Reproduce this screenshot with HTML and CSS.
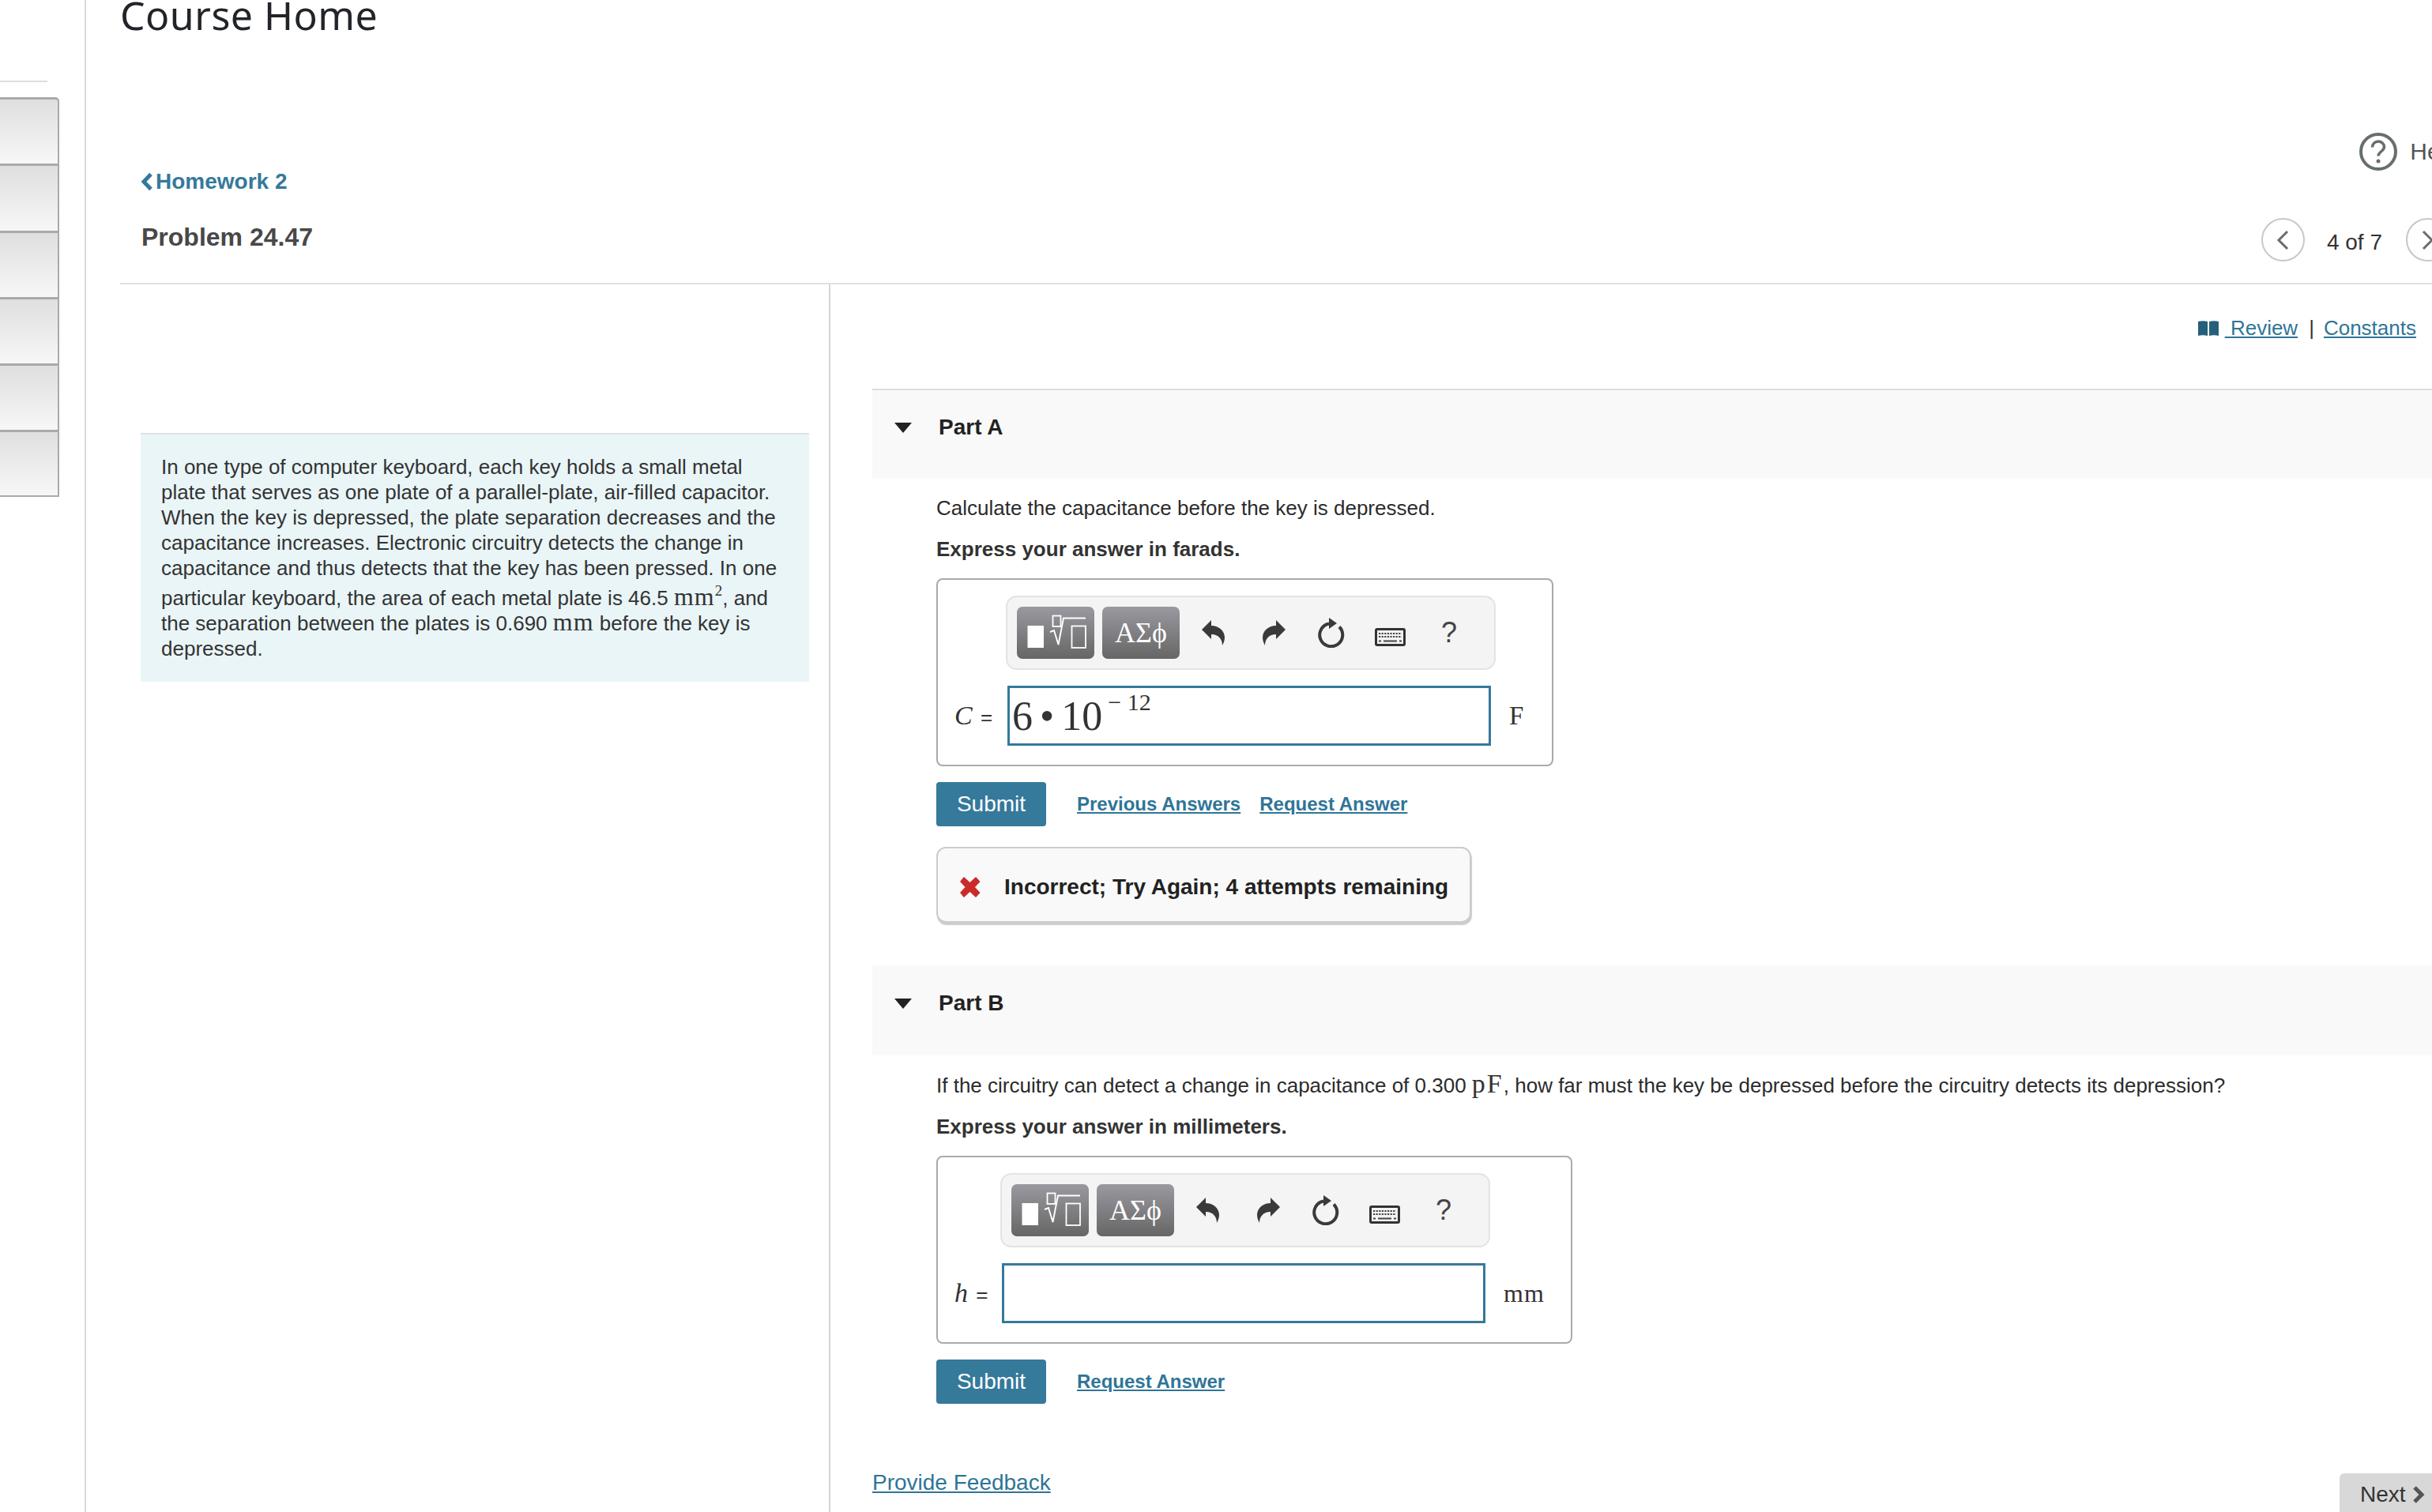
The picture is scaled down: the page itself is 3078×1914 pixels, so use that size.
FILE: index.html
```html
<!DOCTYPE html>
<html lang="en">
<head>
<meta charset="utf-8">
<title>Course Home</title>
<link rel="stylesheet" href="styles.css">
</head>
<body>
<svg class="defs" width="0" height="0" aria-hidden="true">
  <defs>
    <symbol id="i-sqrt" viewBox="0 0 98 66">
      <rect x="13.5" y="24" width="20.5" height="28" fill="#fff"/>
      <rect x="45.5" y="11.5" width="10" height="13.5" fill="none" stroke="#fff" stroke-width="1.8"/>
      <path d="M42 32l5-2 5.5 18L59 14.500h28" fill="none" stroke="#fff" stroke-width="1.900"/>
      <rect x="69.500" y="24.500" width="17.500" height="27.500" fill="none" stroke="#fff" stroke-width="1.800"/>
    </symbol>
    <symbol id="i-undo" viewBox="0 0 29 32">
      <path d="M0 12L12 0v7c10 0 17 7 17 15 0 4-1.500 7-3 10 0-7-4-14-14-14v6z" fill="#3a3a3a"/>
    </symbol>
    <symbol id="i-redo" viewBox="0 0 29 32">
      <path d="M29 12L17 0v7C7 7 0 14 0 22c0 4 1.500 7 3 10 0-7 4-14 14-14v6z" fill="#3a3a3a"/>
    </symbol>
    <symbol id="i-reload" viewBox="0 0 34 38">
      <path d="M27 11.500A14.500 14.500 0 1 1 14 7.500" fill="none" stroke="#3a3a3a" stroke-width="4"/>
      <path d="M14 0l10 7-10 7z" fill="#3a3a3a"/>
    </symbol>
    <symbol id="i-keys" viewBox="0 0 39 23">
      <rect x="1.500" y="1.500" width="36" height="20" rx="1.500" fill="none" stroke="#333" stroke-width="3"/>
      <path d="M5 7h29M5 11h29" stroke="#444" stroke-width="2.200" stroke-dasharray="2.200 1.400" fill="none"/>
      <path d="M5 16.500h3M11 16.500h17M31 16.500h3" stroke="#444" stroke-width="2.200" fill="none"/>
    </symbol>
    <symbol id="i-cross" viewBox="0 0 27 26">
      <path d="M2 6l4-5 7.500 7L21 1l4.500 5-6.500 7 6.500 7-4.500 5-7.500-7-7.500 7-4-5 6.500-7z" fill="#cc2a2a" stroke="#cc2a2a" stroke-linejoin="round" stroke-width="1.500"/>
    </symbol>
  </defs>
</svg>

<div class="app">
  <aside class="rail">
    <hr class="rail-rule">
    <ul class="rail-tabs">
      <li class="rail-tab"></li>
      <li class="rail-tab"></li>
      <li class="rail-tab"></li>
      <li class="rail-tab"></li>
      <li class="rail-tab"></li>
      <li class="rail-tab"></li>
    </ul>
  </aside>

  <main class="main">
    <header class="top">
      <h1 class="course">Course Home</h1>
      <div class="help">
        <svg class="help-icon" viewBox="0 0 48 48" aria-hidden="true">
          <circle cx="24" cy="24" r="22" fill="none" stroke="#666e6e" stroke-width="4"/>
          <path d="M16.500 18.500c0-4.500 3.500-7.500 7.500-7.500s7.500 3 7.500 7c0 5.500-7.500 6-7.500 11.500" fill="none" stroke="#666e6e" stroke-width="3.500"/>
          <circle cx="24" cy="36" r="2.500" fill="#666e6e"/>
        </svg>
        <span class="help-label">Help</span>
      </div>
      <a class="crumb" href="#">
        <svg class="crumb-icon" viewBox="0 0 15 24" aria-hidden="true"><path d="M12 2.500L3 12l9 9.500" fill="none" stroke="#35799b" stroke-width="5"/></svg>Homework 2
      </a>
      <div class="problem-row">
        <h2 class="problem">Problem 24.47</h2>
        <nav class="pager">
          <span class="pager-btn">
            <svg class="pager-icon" viewBox="0 0 16 26" aria-hidden="true"><path d="M14 2L3 13l11 11" fill="none" stroke="#666e6e" stroke-width="3"/></svg>
          </span>
          <span class="pager-text">4 of 7</span>
          <span class="pager-btn">
            <svg class="pager-icon pager-icon-next" viewBox="0 0 16 26" aria-hidden="true"><path d="M2 2l11 11L2 24" fill="none" stroke="#666e6e" stroke-width="3"/></svg>
          </span>
        </nav>
      </div>
    </header>

    <div class="panes">
      <section class="intro-pane">
        <div class="intro">In one type of computer keyboard, each key holds a small metal<br>plate that serves as one plate of a parallel-plate, air-filled capacitor.<br>When the key is depressed, the plate separation decreases and the<br>capacitance increases. Electronic circuitry detects the change in<br>capacitance and thus detects that the key has been pressed. In one<br>particular keyboard, the area of each metal plate is 46.5 <span class="m">mm<sup class="m-sup">2</sup></span>, and<br>the separation between the plates is 0.690 <span class="m">mm</span> before the key is<br>depressed.</div>
      </section>

      <section class="work-pane">
        <div class="refs">
          <svg class="book" viewBox="0 0 26 19" aria-hidden="true"><path d="M0 1c4-1 8-1 12 0v18c-4-1-8-1-12 0zM14 1c4-1 8-1 12 0v18c-4-1-8-1-12 0z" fill="#24607a"/></svg>
          <a class="link ref-review" href="#">&nbsp;Review</a>
          <span class="sep">|</span>
          <a class="link" href="#">Constants</a>
        </div>

        <article class="part part-a">
          <h3 class="part-head"><span class="caret"></span>Part A</h3>
          <div class="part-body">
            <p class="q">Calculate the capacitance before the key is depressed.</p>
            <p class="q q-strong">Express your answer in farads.</p>
            <div class="answer answer-a">
              <div class="tools">
                <span class="tool-btn"><svg class="tool-sqrt" aria-hidden="true"><use href="#i-sqrt"/></svg></span>
                <span class="tool-btn tool-greek">ΑΣϕ</span>
                <svg class="ic ic-undo" aria-hidden="true"><use href="#i-undo"/></svg>
                <svg class="ic ic-redo" aria-hidden="true"><use href="#i-redo"/></svg>
                <svg class="ic ic-reload" aria-hidden="true"><use href="#i-reload"/></svg>
                <svg class="ic ic-keys" aria-hidden="true"><use href="#i-keys"/></svg>
                <span class="tool-q">?</span>
              </div>
              <div class="eq">
                <span class="eq-label"><i class="var var-c">C</i> =</span>
                <div class="eq-input"><span class="val">6 • 10</span><span class="val-exp">− 12</span></div>
                <span class="eq-unit">F</span>
              </div>
            </div>
            <div class="actions">
              <button class="submit" type="button">Submit</button>
              <a class="link-b" href="#">Previous Answers</a>
              <a class="link-b" href="#">Request Answer</a>
            </div>
            <div class="verdict">
              <svg class="cross" aria-hidden="true"><use href="#i-cross"/></svg>
              <span class="verdict-text">Incorrect; Try Again; 4 attempts remaining</span>
            </div>
          </div>
        </article>

        <article class="part part-b">
          <h3 class="part-head"><span class="caret"></span>Part B</h3>
          <div class="part-body">
            <p class="q">If the circuitry can detect a change in capacitance of 0.300 <span class="m m-wide">pF</span>, how far must the key be depressed before the circuitry detects its depression?</p>
            <p class="q q-strong">Express your answer in millimeters.</p>
            <div class="answer answer-b">
              <div class="tools">
                <span class="tool-btn"><svg class="tool-sqrt" aria-hidden="true"><use href="#i-sqrt"/></svg></span>
                <span class="tool-btn tool-greek">ΑΣϕ</span>
                <svg class="ic ic-undo" aria-hidden="true"><use href="#i-undo"/></svg>
                <svg class="ic ic-redo" aria-hidden="true"><use href="#i-redo"/></svg>
                <svg class="ic ic-reload" aria-hidden="true"><use href="#i-reload"/></svg>
                <svg class="ic ic-keys" aria-hidden="true"><use href="#i-keys"/></svg>
                <span class="tool-q">?</span>
              </div>
              <div class="eq">
                <span class="eq-label"><i class="var">h</i> =</span>
                <div class="eq-input"></div>
                <span class="eq-unit eq-unit-mm">mm</span>
              </div>
            </div>
            <div class="actions">
              <button class="submit" type="button">Submit</button>
              <a class="link-b" href="#">Request Answer</a>
            </div>
          </div>
        </article>

        <div class="foot">
          <a class="link link-feedback" href="#">Provide Feedback</a>
          <a class="next" href="#">Next<svg class="next-icon" viewBox="0 0 16 22" aria-hidden="true"><path d="M3 2l9 9-9 9" fill="none" stroke="#555" stroke-width="5"/></svg></a>
        </div>
      </section>
    </div>
  </main>
</div>
</body>
</html>
```

FILE: styles.css
```css
* { box-sizing: border-box; }
html, body { margin: 0; padding: 0; height: 100%; }
body {
  width: 3078px;
  height: 1914px;
  overflow: hidden;
  background: #fff;
  color: #333;
  font-family: "Liberation Sans", Arial, sans-serif;
}
.defs { position: absolute; }

.app { display: flex; height: 1914px; }

/* left rail */
.rail { width: 109px; flex: none; border-right: 2px solid #d9d9d9; }
.rail-rule { margin: 102px 0 0; width: 60px; height: 2px; border: 0; background: #ddd; }
.rail-tabs { list-style: none; margin: 19px 0 0; padding: 0; width: 75px; }
.rail-tab {
  height: 84.300px;
  background: linear-gradient(#dfdfdf, #f7f7f7);
  border-top: 3px solid #aaa;
  border-right: 2px solid #aaa;
}
.rail-tab:first-child { border-top-right-radius: 5px; }
.rail-tab:last-child { border-bottom: 2px solid #aaa; }

/* main */
.main { flex: 1; min-width: 0; margin-left: 43px; }
.top { display: flow-root; height: 360px; border-bottom: 2px solid #e0e0e0; padding-left: 27px; }
.course {
  margin: -9px 0 0 -27px;
  font: 400 50px/56px "Noto Sans", "Open Sans", sans-serif;
  letter-spacing: 0.5px;
  color: #212529;
}
.help { display: flex; align-items: center; gap: 16px; margin: 121px -34px 0 0; justify-content: flex-end; }
.help-icon { width: 48px; height: 48px; flex: none; }
.help-label { font-size: 30px; color: #555; }

.crumb {
  display: flex;
  align-items: center;
  gap: 3px;
  margin-top: -2px;
  font-weight: 700;
  font-size: 28px;
  line-height: 32px;
  color: #35799b;
  text-decoration: none;
}
.crumb-icon { width: 15px; height: 24px; }
.problem-row { display: flex; justify-content: space-between; align-items: flex-start; margin-top: 36px; margin-right: -22px; }
.problem { margin: 0; font-size: 32px; line-height: 36px; font-weight: 700; color: #484848; }
.pager { display: flex; align-items: center; margin-top: -6px; }
.pager-btn {
  display: flex;
  align-items: center;
  justify-content: center;
  width: 55px;
  height: 55px;
  border: 2px solid #c8c8c8;
  border-radius: 50%;
}
.pager-icon { width: 16px; height: 26px; }
.pager-text { margin: 6px 30px 0 28px; font-size: 28px; color: #333; }

/* panes */
.panes { display: grid; grid-template-columns: 899px 1fr; height: 1554px; }
.intro-pane { border-right: 2px solid #d5d5d5; padding: 188px 0 0 26px; }
.intro {
  width: 846px;
  height: 315px;
  background: #e9f5f7;
  border-top: 2px solid #dfe3e6;
  padding: 25px 0 0 26px;
  font-size: 26px;
  line-height: 32px;
  color: #333;
  white-space: nowrap;
}
.m { font-family: "Liberation Serif", serif; font-size: 32px; letter-spacing: 1px; line-height: 0; color: #333; }
.m-wide { font-size: 34px; letter-spacing: 2px; }
.m-sup { font-size: 19px; line-height: 25px; letter-spacing: 0; vertical-align: 12px; }

.work-pane { padding: 40px 20px 0 53px; min-width: 0; }
.refs { display: flex; align-items: center; justify-content: flex-end; height: 30px; font-size: 26px; }
.book { width: 26px; height: 19px; margin-right: 8px; }
.link { color: #2f7597; text-decoration: underline; }
.sep { margin: 0 12px 0 14px; color: #333; }

.part-head {
  display: flex;
  align-items: flex-start;
  height: 114px;
  margin: 0 -20px 0 0;
  padding: 32px 0 0 28px;
  background: #f9f9f9;
  font-size: 28px;
  line-height: 32px;
  font-weight: 700;
  color: #222;
}
.part-a { margin-top: 62px; }
.part-a .part-head { border-top: 2px solid #ddd; padding-top: 31px; }
.part-b { margin-top: 54px; }
.caret {
  flex: none;
  width: 0;
  height: 0;
  margin: 10px 34px 0 0;
  border-left: 11.500px solid transparent;
  border-right: 11.500px solid transparent;
  border-top: 13px solid #222;
}
.part-body { padding: 22px 0 0 81px; }
.part-b .part-body { padding-top: 23px; }
.q { margin: 0 0 22px; font-size: 26px; line-height: 30px; color: #2b2b2b; white-space: nowrap; }
.q-strong { font-weight: 700; color: #333; }

/* answer box */
.answer { border: 2px solid #aaa; border-radius: 8px; height: 238px; padding-top: 20px; }
.answer-a { width: 781px; }
.answer-b { width: 805px; }
.tools {
  display: flex;
  align-items: center;
  width: 620px;
  height: 94px;
  padding-left: 12px;
  background: #f4f4f4;
  border: 2px solid #e3e3e3;
  border-radius: 14px;
}
.answer-a .tools { margin-left: 86px; }
.answer-b .tools { margin-left: 79px; }
.tool-btn {
  display: flex;
  align-items: center;
  justify-content: center;
  width: 98px;
  height: 66px;
  margin-right: 10px;
  border-radius: 7px;
  background: linear-gradient(#9a99a0, #666);
}
.tool-sqrt { width: 98px; height: 66px; }
.tool-greek { font-family: "Liberation Serif", serif; font-size: 36px; color: #fff; margin-right: 28px; }
.ic { flex: none; }
.ic-undo, .ic-redo { width: 29px; height: 32px; }
.ic-undo { margin-right: 48px; }
.ic-redo { margin-right: 41px; }
.ic-reload { width: 34px; height: 38px; margin-right: 38px; }
.ic-keys { width: 39px; height: 23px; margin: 10px 45px 0 0; }
.tool-q { font-size: 36px; color: #444; line-height: 36px; }

.eq { display: flex; align-items: center; margin-top: 20px; padding-left: 21px; }
.eq-label { font-size: 26px; color: #333; white-space: nowrap; word-spacing: 3px; }
.answer-a .eq-label { width: 67px; }
.answer-b .eq-label { width: 60px; }
.var { font-family: "Liberation Serif", serif; font-size: 34px; }
.eq-input {
  display: flex;
  align-items: flex-start;
  width: 612px;
  height: 76px;
  padding: 6px 0 0 3px;
  border: 3px solid #35799b;
  font-family: "Liberation Serif", serif;
  color: #333;
  white-space: nowrap;
}
.val { font-size: 52px; line-height: 60px; word-spacing: -4px; }
.val-exp { font-size: 30px; line-height: 30px; margin: -3px 0 0 7px; }
.eq-unit { margin-left: 23px; font-family: "Liberation Serif", serif; font-size: 33px; color: #333; }
.eq-unit-mm { font-size: 32px; letter-spacing: 1px; }

.actions { display: flex; align-items: center; margin-top: 20px; }
.submit {
  width: 139px;
  height: 56px;
  margin-right: 39px;
  padding: 0;
  border: 0;
  border-radius: 4px;
  background: #35799b;
  color: #fff;
  font: 400 28px "Liberation Sans", Arial, sans-serif;
}
.link-b { margin-right: 24px; font-size: 24px; font-weight: 700; color: #2f7597; text-decoration: underline; }

.verdict {
  display: flex;
  align-items: center;
  width: 677px;
  height: 96px;
  margin-top: 26px;
  padding: 5px 0 0 27px;
  background: #f9f9f9;
  border: 2px solid #ccc;
  border-radius: 12px;
  box-shadow: 1px 3px 1px #ccc;
}
.cross { width: 27px; height: 26px; margin-right: 30px; flex: none; }
.verdict-text { font-size: 28px; font-weight: 700; color: #222; white-space: nowrap; }

/* foot */
.foot { display: flex; align-items: flex-end; justify-content: space-between; margin: 86px -20px 0 0; height: 52px; }
.link-feedback { font-size: 28px; line-height: 32px; margin-bottom: 22px; }
.next {
  display: flex;
  align-items: center;
  width: 117px;
  height: 50px;
  padding: 3px 0 0 26px;
  background: #d8d8d8;
  border-top-left-radius: 6px;
  font-size: 28px;
  color: #333;
  text-decoration: none;
}
.next-icon { width: 16px; height: 22px; margin-left: 8px; }
```
